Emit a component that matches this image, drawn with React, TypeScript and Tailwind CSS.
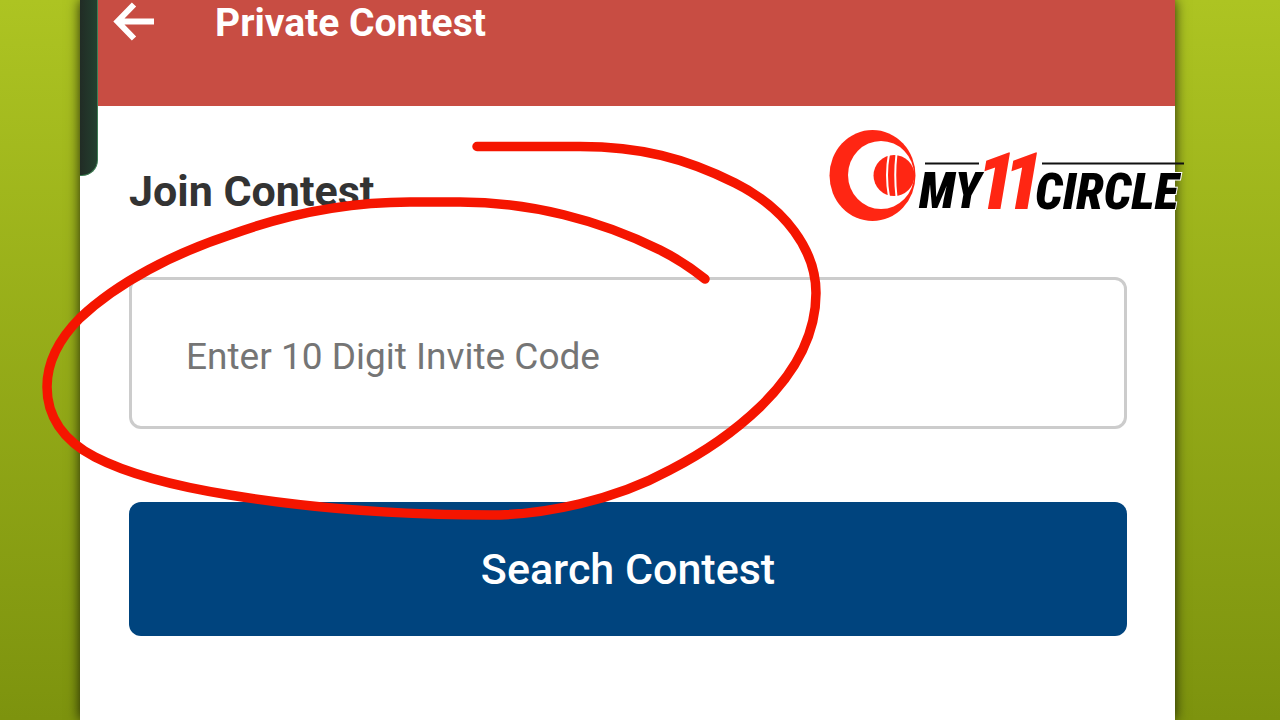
import { useState, type FormEvent } from "react";

function BackArrow() {
  return (
    <svg className="h-11 w-[42px]" viewBox="0 0 42 44" fill="none" stroke="currentColor" strokeWidth={6}>
      <path d="M21 4.500 4.500 21.500 21 38.500M5 21.500H41" />
    </svg>
  );
}

function BrandLogo() {
  return (
    <svg
      className="absolute top-[126px] right-[-12px] h-[100px] w-[360px] overflow-visible"
      viewBox="0 0 360 100"
      role="img"
      aria-label="My11Circle"
    >
      <ellipse cx="45.500" cy="49.500" rx="43" ry="45.500" fill="#ff2613" />
      <ellipse cx="54" cy="49" rx="33" ry="34" fill="#fff" />
      <circle cx="67" cy="49.500" r="20.500" fill="#ff2613" />
      <path d="M62 28Q58 49 62 71M69.500 28Q67 49 69.500 71" fill="none" stroke="#fff" strokeWidth="2" />
      <g className="font-['Roboto_Condensed',Roboto,sans-serif] font-black italic">
        <path d="M98 37.500H152M215 37.500H357" stroke="#111" strokeWidth="2" fill="none" />
        <text x="92" y="82" fontSize="49" fill="#000">MY</text>
        <text x="149" y="83" fontSize="80" fill="#ff2613">1</text>
        <text x="176" y="83" fontSize="80" fill="#ff2613">1</text>
        <text x="208" y="83" fontSize="50" fill="#000" stroke="#fff" strokeWidth="2" paintOrder="stroke">
          CIRCLE
        </text>
      </g>
    </svg>
  );
}

function Highlight() {
  return (
    <svg
      className="pointer-events-none absolute top-0 left-0 w-full"
      viewBox="0 0 1280 720"
      fill="none"
      stroke="#f51500"
      strokeWidth={9.5}
      strokeLinecap="round"
      strokeLinejoin="round"
      aria-hidden="true"
    >
      <path d="M477 146.500H580C640 146.500 685 158 735 183C785 208 816 250 816 293C816 335 795 373 760 407C735 431 705 452 670 470C615 500 545 515 490 515C400 515 310 508 230 495C180 487 128 474 95 457C62 440 47 415 47 387C47 360 60 338 80 318C118 282 175 253 230 235C290 213 350 202 410 202H460C530 202 600 220 660 250C676 258 690 267 705 279" />
    </svg>
  );
}

export default function App() {
  const [code, setCode] = useState("");

  const handleSubmit = (e: FormEvent) => {
    e.preventDefault();
  };

  return (
    <div className="relative flex min-h-screen overflow-hidden bg-linear-to-b from-[#adc422] to-[#7d930e] pr-[105px] pl-20 font-[Roboto,sans-serif]">
      <main className="relative flex-1 bg-white shadow-[0_0_12px_0_rgba(0,0,0,0.8)]">
        <header className="flex items-start gap-[60px] bg-[#c84d43] pb-[60px] pl-[33px] text-white">
          <button type="button" aria-label="Back">
            <BackArrow />
          </button>
          <h1 className="text-[39px] leading-[46px] font-bold">Private Contest</h1>
        </header>
        <div className="absolute top-0 left-0 h-44 w-[18px] rounded-br-2xl border-r border-b border-[#3f7d55] bg-linear-to-r from-[#212c25] to-[#23402f]" />

        <form onSubmit={handleSubmit} className="flex flex-col pt-[61px] pr-12 pb-12 pl-[49px]">
          <label htmlFor="invite-code" className="text-[43px] leading-[48px] font-bold text-[#333]">
            Join Contest
          </label>
          <input
            id="invite-code"
            type="text"
            maxLength={10}
            value={code}
            onChange={(e) => setCode(e.target.value)}
            placeholder="Enter 10 Digit Invite Code"
            className="mt-[62px] h-[152px] rounded-xl border-[3px] border-[#ccc] px-[54px] pt-1.5 text-[37px] text-[#333] outline-none placeholder:text-[#757575]"
          />
          <button
            type="submit"
            className="mt-[73px] h-[134px] rounded-xl bg-[#00447e] text-[43px] font-medium text-white"
          >
            Search Contest
          </button>
        </form>

        <BrandLogo />
      </main>
      <Highlight />
    </div>
  );
}
